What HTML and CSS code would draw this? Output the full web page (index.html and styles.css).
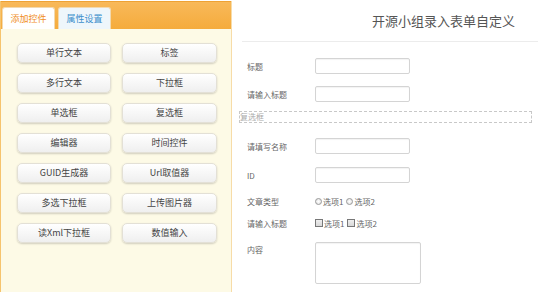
FILE: index.html
```html
<!DOCTYPE html>
<html lang="zh-CN">
<head>
<meta charset="utf-8">
<title>开源小组录入表单自定义</title>
<link rel="stylesheet" href="styles.css">
</head>
<body>
<div class="page">
  <aside class="panel">
    <div class="tabs">
      <div class="tab active">添加控件</div>
      <div class="tab">属性设置</div>
    </div>
    <div class="tools">
      <div class="btn">单行文本</div>
      <div class="btn">标签</div>
      <div class="btn">多行文本</div>
      <div class="btn">下拉框</div>
      <div class="btn">单选框</div>
      <div class="btn">复选框</div>
      <div class="btn">编辑器</div>
      <div class="btn">时间控件</div>
      <div class="btn">GUID生成器</div>
      <div class="btn">Url取值器</div>
      <div class="btn">多选下拉框</div>
      <div class="btn">上传图片器</div>
      <div class="btn">读Xml下拉框</div>
      <div class="btn">数值输入</div>
    </div>
  </aside>
  <main class="main">
    <header class="head"><h1 class="title">开源小组录入表单自定义</h1></header>
    <div class="form">
      <div class="row r1"><span class="label">标题</span><span class="input"></span></div>
      <div class="row r2"><span class="label">请输入标题</span><span class="input"></span></div>
      <div class="drop">复选框</div>
      <div class="row r3"><span class="label">请填写名称</span><span class="input"></span></div>
      <div class="row r4"><span class="label">ID</span><span class="input"></span></div>
      <div class="row r5"><span class="label">文章类型</span>
        <span class="opt"><span class="radio"></span>选项1</span>
        <span class="opt"><span class="radio"></span>选项2</span>
      </div>
      <div class="row r6"><span class="label">请输入标题</span>
        <span class="opt"><span class="check"></span>选项1</span>
        <span class="opt"><span class="check"></span>选项2</span>
      </div>
      <div class="row r7"><span class="label">内容</span><span class="area"></span></div>
    </div>
  </main>
</div>
</body>
</html>
```
FILE: styles.css
```css
html, body {
  margin: 0;
  padding: 0;
  background: #fff;
  font-family: "Noto Sans CJK SC", "Liberation Sans", sans-serif;
}
.page {
  display: flex;
  width: 538px;
  height: 292px;
  overflow: hidden;
}
.panel {
  width: 230px;
  flex: none;
  background: #fdfae6;
  border-left: 1px solid #f6c46e;
  border-right: 1px solid #f7dca8;
  margin-top: 1px;
}
.tabs {
  height: 22px;
  padding: 5px 0 0 1px;
  background: linear-gradient(#f8b95a, #f5ab3c);
  border-top: 1px solid #eea235;
  display: flex;
  gap: 3px;
  align-items: flex-end;
}
.tab {
  width: 53px;
  height: 22px;
  box-sizing: border-box;
  border-radius: 3px 3px 0 0;
  font-size: 9px;
  line-height: 22px;
  text-align: center;
  color: #3b8fcb;
  background: #eef6fb;
  border: 1px solid #f2d9b0;
  border-bottom: none;
}
.tab.active {
  background: #fff;
  color: #f08d1c;
}
.tools {
  display: grid;
  grid-template-columns: 94px 95px;
  column-gap: 11px;
  row-gap: 10px;
  padding: 14px 0 0 16px;
}
.btn {
  height: 20px;
  box-sizing: border-box;
  border: 1px solid #e3e0d6;
  border-radius: 5px;
  background: linear-gradient(#ffffff, #efefef);
  box-shadow: 0 1px 2px rgba(0, 0, 0, 0.18);
  font-size: 9px;
  line-height: 18px;
  text-align: center;
  color: #444;
}
.main {
  flex: 1;
  min-width: 0;
}
.head {
  margin-left: 10px;
  height: 41px;
  border-bottom: 1px solid #ececec;
  display: flex;
  align-items: center;
  justify-content: flex-end;
  padding-right: 23px;
}
.title {
  margin: 0;
  font-size: 13px;
  font-weight: normal;
  color: #555;
}
.form {
  padding-top: 16px;
}
.row {
  display: flex;
  align-items: center;
  padding-left: 15px;
  height: 16px;
  font-size: 8px;
  color: #666;
}
.label {
  width: 68px;
  flex: none;
}
.input {
  width: 95px;
  height: 16px;
  box-sizing: border-box;
  border: 1px solid #d4d4d4;
  border-radius: 2px;
  background: #fff;
  box-shadow: inset 0 1px 1px rgba(0, 0, 0, 0.05);
}
.r2 { margin-top: 12px; }
.drop {
  margin: 9px 6px 0 7px;
  height: 12px;
  box-sizing: border-box;
  border: 1px dashed #c8c8c8;
  font-size: 8px;
  line-height: 10px;
  color: #aaa;
}
.r3 { margin-top: 15px; }
.r4 { margin-top: 13px; }
.r5 { margin-top: 10px; }
.r6 { margin-top: 6px; }
.r7 {
  margin-top: 11px;
  height: auto;
  align-items: flex-start;
}
.r7 .label { padding-top: 2px; }
.opt {
  display: inline-flex;
  align-items: center;
  margin-right: 3px;
  color: #666;
}
.radio {
  width: 7px;
  height: 7px;
  box-sizing: border-box;
  border: 1px solid #999;
  border-radius: 50%;
  background: radial-gradient(#fff, #ddd);
  margin-right: 1px;
}
.check {
  width: 8px;
  height: 8px;
  box-sizing: border-box;
  border: 1px solid #777;
  background: linear-gradient(#eee, #d8d8d8);
  margin-right: 1px;
}
.area {
  width: 106px;
  height: 42px;
  box-sizing: border-box;
  border: 1px solid #d4d4d4;
  border-radius: 2px;
  background: #fff;
  box-shadow: inset 0 1px 1px rgba(0, 0, 0, 0.05);
}
```
